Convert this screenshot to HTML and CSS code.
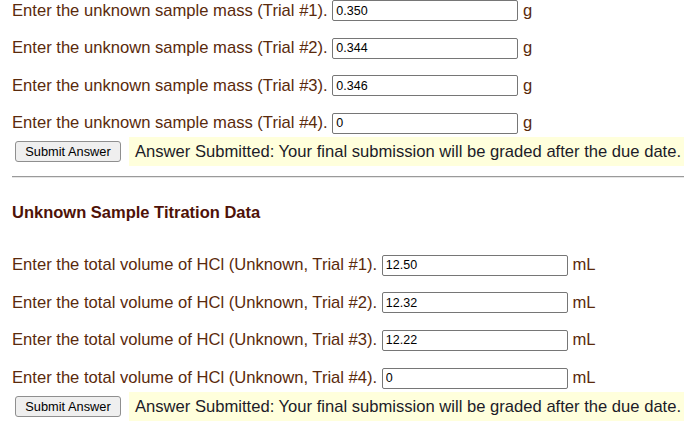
FILE: index.html
```
<!DOCTYPE html>
<html lang="en">
<head>
    <meta charset="UTF-8">
    <title>Unknown Sample Data</title>
    <link rel="stylesheet" href="styles.css">
</head>
<body>
    <section class="part first">
        <div class="row">Enter the unknown sample mass (Trial #1). <input type="text" class="mass" value="0.350"> g</div>
        <div class="row">Enter the unknown sample mass (Trial #2). <input type="text" class="mass" value="0.344"> g</div>
        <div class="row">Enter the unknown sample mass (Trial #3). <input type="text" class="mass" value="0.346"> g</div>
        <div class="row">Enter the unknown sample mass (Trial #4). <input type="text" class="mass" value="0"> g</div>
        <div class="submit-row">
            <button class="btn">Submit Answer</button>
            <span class="notice">Answer Submitted: Your final submission will be graded after the due date.</span>
        </div>
    </section>

    <hr class="divider">

    <h3 class="title">Unknown Sample Titration Data</h3>

    <section class="part">
        <div class="row">Enter the total volume of HCl (Unknown, Trial #1). <input type="text" class="vol" value="12.50"> mL</div>
        <div class="row">Enter the total volume of HCl (Unknown, Trial #2). <input type="text" class="vol" value="12.32"> mL</div>
        <div class="row">Enter the total volume of HCl (Unknown, Trial #3). <input type="text" class="vol" value="12.22"> mL</div>
        <div class="row">Enter the total volume of HCl (Unknown, Trial #4). <input type="text" class="vol" value="0"> mL</div>
        <div class="submit-row">
            <button class="btn">Submit Answer</button>
            <span class="notice">Answer Submitted: Your final submission will be graded after the due date.</span>
        </div>
    </section>
</body>
</html>
```

FILE: styles.css
```
:root {
    --text-color: #5a2a0c;
    --title-color: #4e1208;
    --notice-bg: #ffffdc;
}

body {
    font-family: 'Liberation Sans', Arial, sans-serif;
    font-size: 16.6px;
    margin: 0;
    padding: 0 0 0 12px;
    color: var(--text-color);
    overflow: hidden;
}

.row {
    display: flex;
    align-items: center;
    height: 21px;
    margin-bottom: 16.6px;
    white-space: pre;
}

.row:nth-child(4) {
    margin-bottom: 3px;
}

.row input {
    font-family: 'Liberation Sans', Arial, sans-serif;
    font-size: 12.5px;
    color: #000;
    height: 21px;
    box-sizing: border-box;
    border: 1px solid #767676;
    border-radius: 2px;
    padding: 1px 3px;
    margin: 0;
    flex-shrink: 0;
}

.mass {
    width: 186px;
}

.vol {
    width: 186px;
}

.submit-row {
    display: flex;
    align-items: center;
    height: 29px;
}

.btn {
    font-family: 'Liberation Sans', Arial, sans-serif;
    font-size: 12.8px;
    color: #000;
    background-color: #efefef;
    border: 1px solid #8f8f8f;
    border-radius: 3px;
    height: 21px;
    width: 106px;
    padding: 0;
    margin: 0 8px 0 3px;
    flex-shrink: 0;
}

.notice {
    background-color: var(--notice-bg);
    color: #1c1c28;
    height: 29px;
    line-height: 29px;
    padding: 0 6px;
    white-space: nowrap;
    flex-shrink: 0;
}

.divider {
    margin: 10px 0 0 0;
    border: none;
    border-top: 1px solid #9a9a9a;
    border-bottom: 1px solid #e6e6e6;
}

.title {
    font-size: 16.5px;
    font-weight: bold;
    color: var(--title-color);
    margin: 25px 0 33px 0;
    line-height: 19px;
}
```
